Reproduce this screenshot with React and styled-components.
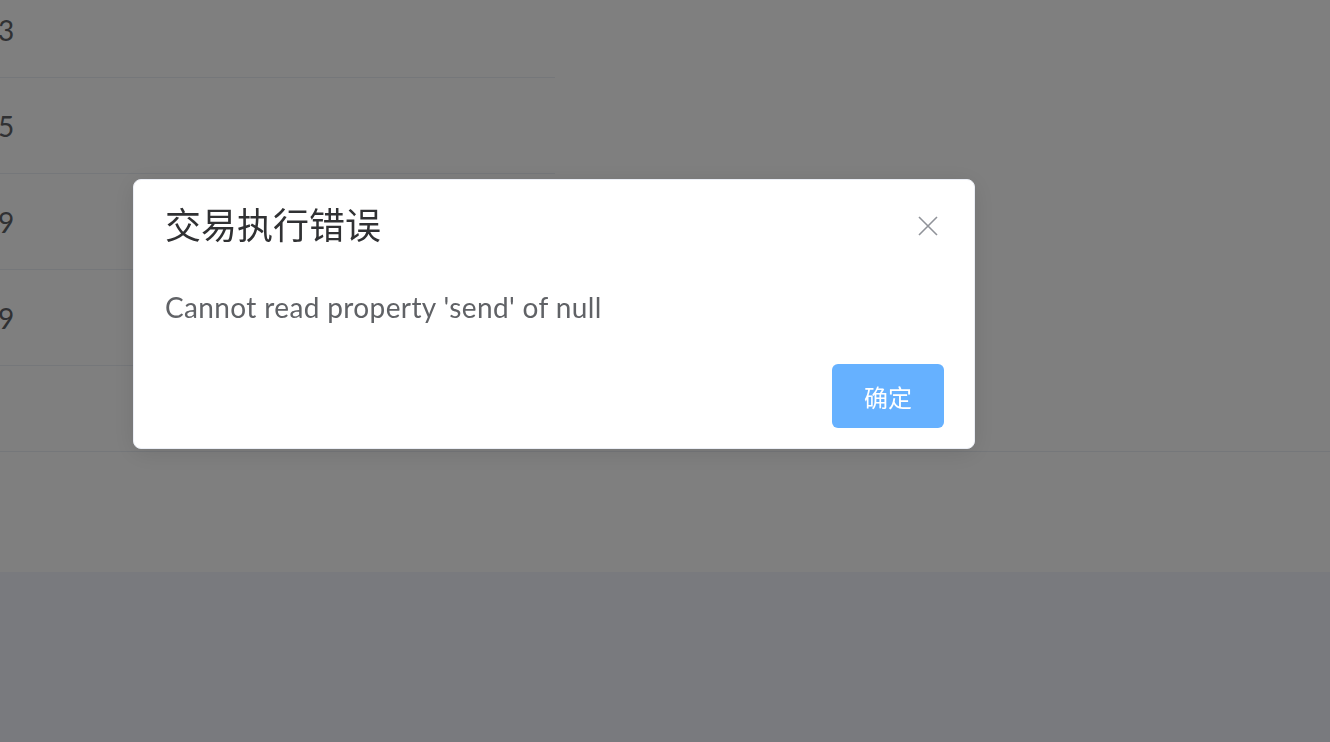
import React from "react";
import styled, { createGlobalStyle } from "styled-components";

const GlobalStyle = createGlobalStyle`
  html, body {
    margin: 0;
    padding: 0;
    overflow: hidden;
  }
  body {
    font-family: Lato, "Noto Sans", "Noto Sans CJK SC", sans-serif;
  }
`;

const Page = styled.div`
  width: 1330px;
  height: 742px;
  display: flex;
  flex-direction: column;
  background: #f2f4fc;
`;

const Content = styled.div`
  height: 572px;
  background: #fff;
  overflow: hidden;
`;

const Table = styled.div`
  margin-top: -18px;
  display: flex;
  flex-direction: column;
`;

const Row = styled.div`
  width: 557px;
  height: 96px;
  margin-left: -2px;
  display: flex;
  align-items: center;
  border-bottom: 1px solid #ebeef5;
  box-sizing: border-box;
  font-size: 28px;
  color: #606266;
`;

const FooterRow = styled.div`
  height: 86px;
  border-bottom: 1px solid #ebeef5;
  box-sizing: border-box;
`;

const Overlay = styled.div`
  position: fixed;
  inset: 0;
  background: rgba(0, 0, 0, 0.5);
  padding: 179px 0 0 133px;
  box-sizing: border-box;
`;

const Box = styled.div`
  width: 842px;
  box-sizing: border-box;
  background: #fff;
  border: 1px solid #ebeef5;
  border-radius: 8px;
  box-shadow: 0 4px 24px rgba(0, 0, 0, 0.1);
  padding-bottom: 20px;
`;

const Header = styled.div`
  display: flex;
  justify-content: space-between;
  align-items: flex-start;
  padding: 25px 36px 22px 31px;
`;

const Title = styled.div`
  font-family: "Noto Sans CJK SC", sans-serif;
  font-size: 36px;
  line-height: 36px;
  color: #303133;
`;

const CloseButton = styled.button`
  border: 0;
  background: none;
  padding: 0;
  margin-top: 11px;
  width: 20px;
  height: 20px;
  display: flex;
  cursor: pointer;
`;

const Message = styled.p`
  margin: 0;
  padding: 20px 31px;
  font-size: 28px;
  line-height: 48px;
  letter-spacing: 0.37px;
  color: #606266;
`;

const Actions = styled.div`
  display: flex;
  justify-content: flex-end;
  padding: 13px 30px 0;
`;

const PrimaryButton = styled.button`
  width: 112px;
  height: 64px;
  border: 0;
  border-radius: 6px;
  background: #66b1ff;
  color: #fff;
  font-family: "Noto Sans CJK SC", sans-serif;
  font-size: 24px;
  cursor: pointer;
`;

const rows = ["3", "5", "9", "9"];

export default function App() {
  return (
    <>
      <GlobalStyle />
      <Page>
        <Content>
          <Table>
            {rows.map((v, i) => (
              <Row key={i}>{v}</Row>
            ))}
            <FooterRow />
          </Table>
        </Content>
      </Page>
      <Overlay>
        <Box>
          <Header>
            <Title>交易执行错误</Title>
            <CloseButton aria-label="Close">
              <svg width="20" height="20" viewBox="0 0 20 20">
                <path
                  d="M1 1 L19 19 M19 1 L1 19"
                  stroke="#909399"
                  strokeWidth="1.6"
                  fill="none"
                />
              </svg>
            </CloseButton>
          </Header>
          <Message>Cannot read property 'send' of null</Message>
          <Actions>
            <PrimaryButton>确定</PrimaryButton>
          </Actions>
        </Box>
      </Overlay>
    </>
  );
}
